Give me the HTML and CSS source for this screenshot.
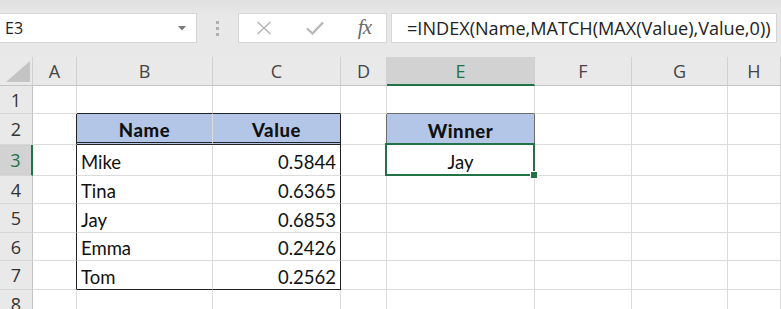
FILE: index.html
```html
<!DOCTYPE html>
<html>
  <head>
    <title>Excel INDEX MATCH</title>
    <link rel="stylesheet" href="styles.css">
  </head>
  <body>
    <div class="toolbar">
      <div class="namebox">
        <span>E3</span>
        <svg class="caret" width="8" height="5" viewBox="0 0 8 5"><polygon points="0,0 8,0 4,4.5" fill="#7a7a7a"/></svg>
      </div>
      <div class="grip"><i></i><i></i><i></i></div>
      <div class="fxbox">
        <svg width="16" height="14" viewBox="0 0 16 14"><path d="M1.5 1 L14.5 13 M14.5 1 L1.5 13" stroke="#b5b5b5" stroke-width="1.6" fill="none"/></svg>
        <svg width="18" height="14" viewBox="0 0 18 14"><path d="M1 7.5 L6.5 12.5 L17 1.5" stroke="#b5b5b5" stroke-width="2.2" fill="none"/></svg>
        <span class="fx">fx</span>
      </div>
      <div class="formula">=INDEX(Name,MATCH(MAX(Value),Value,0))</div>
    </div>

    <div class="sheet">
      <div class="corner"><svg width="24" height="21" viewBox="0 0 24 21"><polygon points="24,0 24,21 0,21" fill="#c4c4c4"/></svg></div>
      <div class="ch">A</div>
      <div class="ch">B</div>
      <div class="ch">C</div>
      <div class="ch">D</div>
      <div class="ch sel">E</div>
      <div class="ch">F</div>
      <div class="ch">G</div>
      <div class="ch">H</div>

      <div class="rh">1</div>
      <div class="c"></div>
      <div class="c top-edge"></div>
      <div class="c top-edge"></div>
      <div class="c"></div>
      <div class="c top-grey"></div>
      <div class="c"></div>
      <div class="c"></div>
      <div class="c"></div>

      <div class="rh">2</div>
      <div class="c left-edge"></div>
      <div class="c th">Name</div>
      <div class="c th right-edge">Value</div>
      <div class="c left-grey"></div>
      <div class="c th win">Winner</div>
      <div class="c"></div>
      <div class="c"></div>
      <div class="c"></div>

      <div class="rh sel">3</div>
      <div class="c left-edge"></div>
      <div class="c">Mike</div>
      <div class="c num right-edge">0.5844</div>
      <div class="c"></div>
      <div class="c active">Jay</div>
      <div class="c"></div>
      <div class="c"></div>
      <div class="c"></div>

      <div class="rh">4</div>
      <div class="c left-edge"></div>
      <div class="c">Tina</div>
      <div class="c num right-edge">0.6365</div>
      <div class="c"></div>
      <div class="c"></div>
      <div class="c"></div>
      <div class="c"></div>
      <div class="c"></div>

      <div class="rh">5</div>
      <div class="c left-edge"></div>
      <div class="c">Jay</div>
      <div class="c num right-edge">0.6853</div>
      <div class="c"></div>
      <div class="c"></div>
      <div class="c"></div>
      <div class="c"></div>
      <div class="c"></div>

      <div class="rh">6</div>
      <div class="c left-edge"></div>
      <div class="c">Emma</div>
      <div class="c num right-edge">0.2426</div>
      <div class="c"></div>
      <div class="c"></div>
      <div class="c"></div>
      <div class="c"></div>
      <div class="c"></div>

      <div class="rh">7</div>
      <div class="c left-edge"></div>
      <div class="c bot-edge">Tom</div>
      <div class="c num right-edge bot-edge">0.2562</div>
      <div class="c"></div>
      <div class="c"></div>
      <div class="c"></div>
      <div class="c"></div>
      <div class="c"></div>

      <div class="rh">8</div>
      <div class="c"></div>
      <div class="c"></div>
      <div class="c"></div>
      <div class="c"></div>
      <div class="c"></div>
      <div class="c"></div>
      <div class="c"></div>
      <div class="c"></div>
    </div>
  </body>
</html>
```

FILE: styles.css
```css
body { margin: 0; width: 781px; height: 309px; overflow: hidden; background: #fff; font-family: "Open Sans", "Noto Sans", sans-serif; }

/* formula bar */
.toolbar { height: 57px; box-sizing: border-box; padding-top: 13px; background: linear-gradient(#e0e0e0, #e8e8e8 14px, #e8e8e8); display: flex; align-items: flex-start; }
.namebox { width: 197px; height: 30px; box-sizing: border-box; background: #fff; border: 1px solid #d6d6d6; border-left: none; display: flex; align-items: center; justify-content: space-between; padding: 0 10px 0 5px; font-size: 16px; color: #222; }
.caret { margin-top: 1px; }
.grip { width: 41px; height: 30px; display: flex; flex-direction: column; align-items: center; justify-content: center; gap: 3px; }
.grip i { display: block; width: 3px; height: 3px; background: #b0b0b0; }
.fxbox { width: 149px; height: 30px; box-sizing: border-box; background: #fff; border: 1px solid #d6d6d6; display: flex; align-items: center; padding: 0 15px 0 17px; justify-content: space-between; }
.fx { font-family: "Liberation Serif", serif; font-style: italic; font-size: 21px; color: #6a6a6a; letter-spacing: -1px; margin-bottom: 2px; }
.formula { width: 386px; margin-left: 4px; height: 30px; box-sizing: border-box; background: #fff; border: 1px solid #d6d6d6; padding: 0 0 0 15px; display: flex; align-items: center; font-size: 18.1px; color: #222; white-space: nowrap; overflow: hidden; }

/* grid */
.sheet { display: grid; grid-template-columns: 33px 44px 136px 128px 46px 148px 97px 96px 1fr; grid-template-rows: 29px 28px 31px 31px 28px 29px 28px 29px 29px; }
.corner { background: #e9e9e9; border-right: 1px solid #d0d0d0; border-bottom: 1px solid #c4c4c4; display: flex; align-items: flex-end; justify-content: flex-end; padding: 0 2px 3px 0; }
.corner svg { display: block; }
.ch, .rh { background: #e9e9e9; color: #444; font-size: 18px; display: flex; align-items: center; justify-content: center; box-sizing: border-box; }
.ch { border-right: 1px solid #d0d0d0; border-bottom: 1px solid #c4c4c4; }
.rh { border-right: 1px solid #c4c4c4; border-bottom: 1px solid #d6d6d6; color: #333; }
.ch.sel { background: #d2d2d2; color: #217346; border-bottom: 2px solid #217346; }
.rh.sel { background: #d2d2d2; color: #217346; border-right: 2px solid #217346; }

.c { box-sizing: border-box; border-right: 1px solid #dcdcdc; border-bottom: 1px solid #dcdcdc; font-family: "Lato", "Open Sans", sans-serif; font-size: 18.5px; color: #111; display: flex; align-items: center; padding: 3px 4px 0 4px; white-space: nowrap; }
.num { justify-content: flex-end; }
.th { background: #b4c6e7; font-weight: 900; letter-spacing: 0.6px; justify-content: center; border-bottom: 3px double #222; }
.left-edge { border-right-color: #222; }
.right-edge { border-right-color: #222; }
.top-edge { border-bottom-color: #222; }
.bot-edge { border-bottom-color: #222; }
.top-grey { border-bottom-color: #6e6e6e; }
.left-grey { border-right-color: #6e6e6e; }
.win { border-right-color: #6e6e6e; border-bottom: 1px solid #6e6e6e; }

.active { position: relative; justify-content: center; }
.active::after { content: ""; position: absolute; top: -2px; left: -2px; right: -1px; bottom: -1px; border: 2px solid #217346; }
.active::before { content: ""; position: absolute; right: -4px; bottom: -4px; width: 6px; height: 6px; background: #217346; border: 1px solid #fff; z-index: 1; }
```
